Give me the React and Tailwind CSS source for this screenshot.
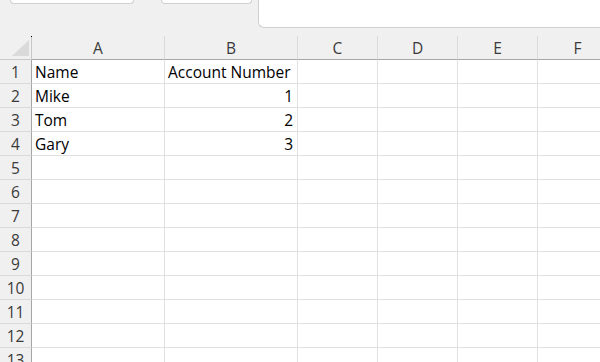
import React from 'react';

const cols = ['A', 'B', 'C', 'D', 'E', 'F'];
const widths = ['w-[133px]', 'w-[133px]', 'w-[80px]', 'w-[80px]', 'w-[80px]', 'w-[80px]'];

const data = [
  ['Name', 'Account Number'],
  ['Mike', 1],
  ['Tom', 2],
  ['Gary', 3],
];

const Sheet = () => {
  const rows = Array.from({ length: 13 }, (_, i) => i + 1);

  return (
    <div className="w-[600px] h-[362px] overflow-hidden bg-[#f0f0f0] font-['Open_Sans','Liberation_Sans',sans-serif] text-[15.5px] text-black">
      {/* Ribbon remnants */}
      <div className="flex h-[36px] items-start">
        <div className="ml-[10px] w-[124px] h-[4px] bg-white border border-t-0 border-[#d0d0d0] rounded-b-[5px]"></div>
        <div className="ml-[27px] w-[91px] h-[4px] bg-white border border-t-0 border-[#d0d0d0] rounded-b-[5px]"></div>
        <div className="ml-auto w-[342px] h-[28px] bg-white border-l border-b border-[#d0d0d0] rounded-bl-[6px]"></div>
      </div>

      {/* Column header */}
      <div className="flex h-[24px] w-max">
        <div className="relative w-[32px] h-full border-r border-b border-[#c8c8c8]">
          <div className="absolute right-[-1px] top-0 w-px h-px bg-black"></div>
          <svg className="absolute left-[12px] top-[4px]" width="17" height="16" viewBox="0 0 17 16">
            <polygon points="17,0 17,16 0,16" fill="#dadada" />
          </svg>
        </div>
        {cols.map((c, i) => (
          <div
            key={c}
            className={`${widths[i]} h-full flex items-center justify-center border-r border-b border-r-[#dadada] border-b-[#a6a6a6] text-[#3a3a3a] pt-[2px]`}
          >
            {c}
          </div>
        ))}
      </div>

      {/* Rows */}
      {rows.map((r) => (
        <div key={r} className="flex h-[24px] w-max">
          <div className="w-[32px] h-full flex items-center justify-center border-r border-b border-r-[#a6a6a6] border-b-[#dadada] text-[#3a3a3a] pt-[2px]">
            {r}
          </div>
          {cols.map((c, i) => {
            const v = data[r - 1] ? data[r - 1][i] : undefined;
            const isNum = typeof v === 'number';
            return (
              <div
                key={c}
                className={`${widths[i]} h-full flex items-center bg-white border-r border-b border-[#e1e1e1] pt-[2px] ${isNum ? 'justify-end pr-[4px]' : 'pl-[3px]'}`}
              >
                {v}
              </div>
            );
          })}
        </div>
      ))}
    </div>
  );
};

export default function App() {
  return <Sheet />;
}
